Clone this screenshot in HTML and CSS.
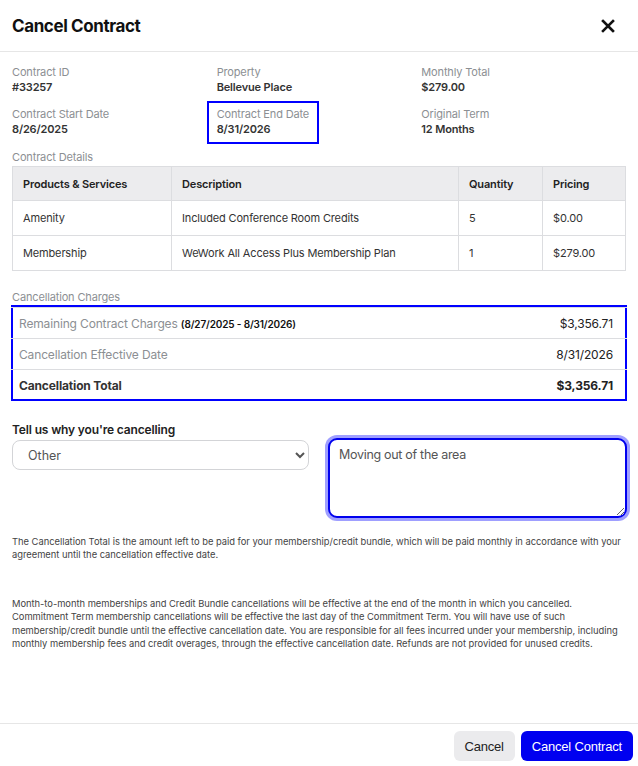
FILE: index.html
```html
<!DOCTYPE html>
<html lang="en">
<head>
  <meta charset="UTF-8" />
  <meta name="viewport" content="width=device-width, initial-scale=1.0"/>
  <title>Cancel Contract</title>
  <link rel="stylesheet" href="styles.css">
</head>
<body>
  <div class="modal">
    <div class="modal-header">
      <h1>Cancel Contract</h1>
      <button class="close-btn" aria-label="Close">
        <svg width="14" height="14" viewBox="0 0 14 14">
          <path d="M2 2 L12 12 M12 2 L2 12" stroke="#111" stroke-width="2.6" stroke-linecap="square" fill="none"/>
        </svg>
      </button>
    </div>

    <div class="modal-body">
      <div class="info-grid">
        <div class="info-item">
          <div class="info-label">Contract ID</div>
          <div class="info-value">#33257</div>
        </div>
        <div class="info-item">
          <div class="info-label">Property</div>
          <div class="info-value">Bellevue Place</div>
        </div>
        <div class="info-item">
          <div class="info-label">Monthly Total</div>
          <div class="info-value">$279.00</div>
        </div>
        <div class="info-item">
          <div class="info-label">Contract Start Date</div>
          <div class="info-value">8/26/2025</div>
        </div>
        <div class="info-item">
          <div class="highlight">
            <div class="info-label">Contract End Date</div>
            <div class="info-value">8/31/2026</div>
          </div>
        </div>
        <div class="info-item">
          <div class="info-label">Original Term</div>
          <div class="info-value">12 Months</div>
        </div>
      </div>

      <div class="section-label details-label">Contract Details</div>
      <table class="details-table">
        <thead>
          <tr>
            <th class="col-product">Products &amp; Services</th>
            <th class="col-desc">Description</th>
            <th class="col-qty">Quantity</th>
            <th>Pricing</th>
          </tr>
        </thead>
        <tbody>
          <tr>
            <td>Amenity</td>
            <td>Included Conference Room Credits</td>
            <td>5</td>
            <td>$0.00</td>
          </tr>
          <tr>
            <td>Membership</td>
            <td>WeWork All Access Plus Membership Plan</td>
            <td>1</td>
            <td>$279.00</td>
          </tr>
        </tbody>
      </table>

      <div class="section-label charges-label">Cancellation Charges</div>
      <div class="charges">
        <div class="charge-row">
          <span class="charge-name">Remaining Contract Charges <span class="charge-range">(8/27/2025 - 8/31/2026)</span></span>
          <span class="charge-value">$3,356.71</span>
        </div>
        <div class="charge-row">
          <span class="charge-name">Cancellation Effective Date</span>
          <span class="charge-value">8/31/2026</span>
        </div>
        <div class="charge-row total">
          <span class="charge-name">Cancellation Total</span>
          <span class="charge-value">$3,356.71</span>
        </div>
      </div>

      <div class="reason">
        <label class="reason-label" for="reasonSelect">Tell us why you're cancelling</label>
        <select id="reasonSelect" class="reason-select">
          <option>Other</option>
        </select>
        <textarea class="reason-text">Moving out of the area</textarea>
      </div>

      <p class="note">The Cancellation Total is the amount left to be paid for your membership/credit bundle, which will be paid monthly in accordance with your agreement until the cancellation effective date.</p>
      <p class="note note-terms">Month-to-month memberships and Credit Bundle cancellations will be effective at the end of the month in which you cancelled. Commitment Term membership cancellations will be effective the last day of the Commitment Term. You will have use of such membership/credit bundle until the effective cancellation date. You are responsible for all fees incurred under your membership, including monthly membership fees and credit overages, through the effective cancellation date. Refunds are not provided for unused credits.</p>
    </div>

    <div class="modal-footer">
      <button class="btn btn-secondary">Cancel</button>
      <button class="btn btn-primary">Cancel Contract</button>
    </div>
  </div>
</body>
</html>
```

FILE: styles.css
```css
body {
  margin: 0;
  background: #fff;
  font-family: Inter, "Noto Sans", sans-serif;
  letter-spacing: -0.15px;
  color: #222;
}

.modal {
  display: flex;
  flex-direction: column;
  min-height: 100vh;
  box-sizing: border-box;
}

.modal-header {
  display: flex;
  align-items: center;
  justify-content: space-between;
  height: 51px;
  padding: 0 23px 0 12px;
  border-bottom: 1px solid #e6e6e6;
}

.modal-header h1 {
  margin: 0;
  font-size: 17px;
  font-weight: 700;
  color: #111;
  letter-spacing: -0.4px;
}

.close-btn {
  border: none;
  background: none;
  padding: 0;
  cursor: pointer;
  display: flex;
}

.modal-body {
  flex: 1;
  padding: 13px 12px 0;
}

/* contract summary */
.info-grid {
  display: grid;
  grid-template-columns: repeat(3, 1fr);
  row-gap: 12px;
}

.info-label {
  font-size: 11px;
  line-height: 15px;
  color: #8c8f93;
}

.info-value {
  font-size: 11px;
  line-height: 15px;
  font-weight: 600;
  color: #333;
}

.highlight {
  display: inline-block;
  padding: 6px 10px 7px;
  margin: -6px -10px -7px;
  box-shadow: inset 0 0 0 2px #0000ff;
}

.section-label {
  font-size: 11px;
  line-height: 16px;
  color: #8c8f93;
}

.details-label {
  margin-top: 12px;
}

/* products table */
.details-table {
  width: 100%;
  margin-top: 1px;
  border-collapse: collapse;
  font-size: 11px;
  color: #333;
}

.details-table th,
.details-table td {
  border: 1px solid #dcdde0;
  padding: 0 10px;
  text-align: left;
}

.details-table th {
  height: 33px;
  background: #ececee;
  font-weight: 600;
  color: #222;
}

.details-table td {
  height: 34px;
}

.col-product { width: 138px; }
.col-desc { width: 266px; }
.col-qty { width: 63px; }

/* cancellation charges */
.charges-label {
  margin-top: 18px;
}

.charges {
  margin: 0 -1px 0;
  padding: 2px 0 1px;
  box-shadow: inset 0 0 0 2px #0000ff;
}

.charge-row {
  display: flex;
  justify-content: space-between;
  align-items: center;
  height: 30px;
  padding: 0 14px 0 8px;
  border-top: 1px solid #dcdde0;
  font-size: 12px;
  color: #8c8f93;
}

.charge-value {
  color: #222;
}

.charge-range {
  font-size: 10px;
  font-weight: 600;
  color: #111;
}

.charge-row.total {
  font-weight: 700;
}

.charge-row.total .charge-name {
  color: #333;
}

/* reason for cancelling */
.reason {
  display: grid;
  grid-template-columns: 297px 299px;
  column-gap: 19px;
  grid-template-areas:
    "label ."
    "select text";
  margin-top: 21px;
}

.reason-label {
  grid-area: label;
  font-size: 12px;
  font-weight: 600;
  color: #222;
  line-height: 16px;
}

.reason-select {
  grid-area: select;
  align-self: start;
  margin-top: 2px;
  height: 30px;
  padding: 0 8px 0 11px;
  border: 1px solid #d3d4d7;
  border-radius: 8px;
  background: #fff;
  font-family: inherit;
  font-size: 12.5px;
  color: #555;
}

.reason-text {
  grid-area: text;
  height: 80px;
  box-sizing: border-box;
  margin-top: 0;
  padding: 7px 9px;
  border: 2px solid #0000ee;
  border-radius: 9px;
  box-shadow: 0 0 0 3px rgba(80, 80, 255, 0.55);
  outline: none;
  resize: vertical;
  font-family: inherit;
  font-size: 12.5px;
  letter-spacing: -0.3px;
  color: #555;
}

.note {
  margin: 17px 0 0;
  font-size: 9.4px;
  line-height: 13.4px;
  letter-spacing: -0.03px;
  color: #444;
}

.note-terms {
  margin-top: 35px;
}

/* footer actions */
.modal-footer {
  display: flex;
  justify-content: flex-end;
  gap: 6px;
  padding: 7px 5px 5px;
  border-top: 1px solid #e6e6e6;
}

.btn {
  height: 30px;
  border: none;
  border-radius: 6px;
  padding: 0 11px;
  font-family: "Liberation Sans", Arial, sans-serif;
  font-size: 13px;
  letter-spacing: -0.2px;
  cursor: pointer;
}

.btn-secondary {
  background: #ebebed;
  color: #222;
}

.btn-primary {
  background: #0000f0;
  color: #fff;
}
```
